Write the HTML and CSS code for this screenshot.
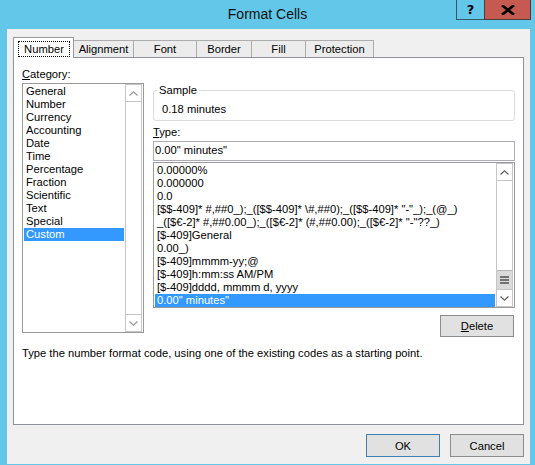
FILE: index.html
```html
<!DOCTYPE html>
<html>
<head>
<meta charset="utf-8">
<title>Format Cells</title>
<link rel="stylesheet" href="styles.css">
</head>
<body>
<div class="window">
  <div class="titlebar">
    <div class="tb-spacer"></div>
    <div class="title">Format Cells</div>
    <div class="caption-btns">
      <div class="cbtn help">?</div>
      <div class="cbtn close">
        <svg width="14" height="10" viewBox="0 0 14 10"><path d="M2 1 L12 9 M12 1 L2 9" stroke="#000" stroke-width="2.6" stroke-linecap="square" fill="none"/></svg>
      </div>
    </div>
  </div>
  <div class="client">
    <div class="tabs">
      <div class="tab sel t-number"><span class="focus">Number</span></div>
      <div class="tab t-align">Alignment</div>
      <div class="tab t-font">Font</div>
      <div class="tab t-border">Border</div>
      <div class="tab t-fill">Fill</div>
      <div class="tab t-prot">Protection</div>
    </div>
    <div class="panel">
      <div class="cols">
        <div class="left">
          <div class="label"><u>C</u>ategory:</div>
          <div class="listbox cat">
            <div class="items">
              <div class="row">General</div>
              <div class="row">Number</div>
              <div class="row">Currency</div>
              <div class="row">Accounting</div>
              <div class="row">Date</div>
              <div class="row">Time</div>
              <div class="row">Percentage</div>
              <div class="row">Fraction</div>
              <div class="row">Scientific</div>
              <div class="row">Text</div>
              <div class="row">Special</div>
              <div class="row sel">Custom</div>
            </div>
            <div class="vscroll">
              <div class="sbtn up"><svg width="9" height="5" viewBox="0 0 9 5"><path d="M0.5 4.5 L4.5 0.8 L8.5 4.5" stroke="#9a9a9a" stroke-width="1.2" fill="none"/></svg></div>
              <div class="track"></div>
              <div class="sbtn down"><svg width="9" height="5" viewBox="0 0 9 5"><path d="M0.5 0.5 L4.5 4.2 L8.5 0.5" stroke="#9a9a9a" stroke-width="1.2" fill="none"/></svg></div>
            </div>
          </div>
        </div>
        <div class="right">
          <fieldset class="sample">
            <legend>Sample</legend>
            <div class="sample-val">0.18 minutes</div>
          </fieldset>
          <div class="label type-label"><u>T</u>ype:</div>
          <div class="input">0.00" minutes"</div>
          <div class="listbox fmt">
            <div class="items">
              <div class="row">0.00000%</div>
              <div class="row">0.000000</div>
              <div class="row">0.0</div>
              <div class="row">[$$-409]* #,##0_);_([$$-409]* \#,##0);_([$$-409]* "-"_);_(@_)</div>
              <div class="row">_([$€-2]* #,##0.00_);_([$€-2]* (#,##0.00);_([$€-2]* "-"??_)</div>
              <div class="row">[$-409]General</div>
              <div class="row">0.00_)</div>
              <div class="row">[$-409]mmmm-yy;@</div>
              <div class="row">[$-409]h:mm:ss AM/PM</div>
              <div class="row">[$-409]dddd, mmmm d, yyyy</div>
              <div class="row sel">0.00" minutes"</div>
            </div>
            <div class="vscroll">
              <div class="sbtn up"><svg width="9" height="5" viewBox="0 0 9 5"><path d="M0.5 4.5 L4.5 0.8 L8.5 4.5" stroke="#606060" stroke-width="1.2" fill="none"/></svg></div>
              <div class="track"></div>
              <div class="thumb"><svg width="9" height="8" viewBox="0 0 9 8"><path d="M0 1 H9 M0 4 H9 M0 7 H9" stroke="#505050" stroke-width="1.3" fill="none"/></svg></div>
              <div class="sbtn down"><svg width="9" height="5" viewBox="0 0 9 5"><path d="M0.5 0.5 L4.5 4.2 L8.5 0.5" stroke="#606060" stroke-width="1.2" fill="none"/></svg></div>
            </div>
          </div>
          <div class="btnrow">
            <div class="btn delete"><u>D</u>elete</div>
          </div>
        </div>
      </div>
      <div class="desc">Type the number format code, using one of the existing codes as a starting point.</div>
    </div>
    <div class="footer">
      <div class="btn default">OK</div>
      <div class="btn">Cancel</div>
    </div>
  </div>
</div>
</body>
</html>
```

FILE: styles.css
```css
* { box-sizing: border-box; }

html, body {
  margin: 0;
  padding: 0;
  background: #63c7e9;
}

body {
  font-family: "Liberation Sans", Arial, sans-serif;
  font-size: 11.2px;
  color: #000;
}

.window {
  width: 535px;
  height: 465px;
  background: #63c7e9;
  padding: 0 5px 1px 7px;
  display: flex;
  flex-direction: column;
}

/* title bar */
.titlebar {
  height: 29px;
  margin: 0 -5px 0 -7px;
  display: grid;
  grid-template-columns: 1fr auto 1fr;
  flex: none;
}

.title {
  font-size: 14px;
  line-height: 29px;
  color: #111;
}

.caption-btns {
  justify-self: end;
  align-self: start;
  display: flex;
  margin-right: 4px;
}

.cbtn {
  height: 20px;
  border: 1px solid #2f5b70;
  border-top: none;
  display: flex;
  align-items: center;
  justify-content: center;
}

.help {
  width: 29px;
  background: #63c7e9;
  font-family: "DejaVu Sans", sans-serif;
  font-weight: bold;
  font-size: 13px;
  line-height: 1;
}

.close {
  width: 47px;
  margin-left: -1px;
  background: #c75a50;
  border-color: #4d3a3a;
}

/* client */
.client {
  flex: 1;
  background: #f0f0f0;
  padding: 8px 6px 0 6px;
}

.tabs {
  height: 20px;
  display: flex;
  align-items: flex-end;
}

.tab {
  height: 17px;
  border: 1px solid #acacac;
  border-bottom: none;
  background: #ececec;
  margin-left: -1px;
  display: flex;
  align-items: center;
  justify-content: center;
  line-height: 13px;
  padding-top: 1px;
}

.tab.sel {
  height: 21px;
  margin-left: 0;
  margin-bottom: -1px;
  background: #fff;
  position: relative;
  z-index: 2;
  border-color: #9a9a9a;
  align-items: flex-start;
  padding-top: 3px;
}

.focus {
  display: block;
  width: 52px;
  height: 16px;
  border: 1px dotted #000;
  text-align: center;
  line-height: 14px;
  margin-left: 1px;
}

.t-number { width: 61px; }
.t-align { width: 61px; }
.t-font { width: 64px; }
.t-border { width: 56px; }
.t-fill { width: 55px; }
.t-prot { width: 69px; }

.panel {
  height: 368px;
  background: #fff;
  border: 1px solid #8f9297;
  padding: 10px 8px 0 8px;
}

.cols {
  display: grid;
  grid-template-columns: 122px 362px;
  column-gap: 9px;
  align-items: start;
}

.label {
  line-height: 13px;
  height: 13px;
}

.left .label {
  margin-bottom: 2px;
}

/* list boxes */
.listbox {
  border: 1px solid #9a9a9a;
  display: flex;
  background: #fff;
}

.listbox.cat { height: 250px; }
.listbox.fmt { height: 146px; margin-top: 1px; }

.items {
  flex: 1;
  padding: 1px;
  overflow: hidden;
}

.row {
  height: 13px;
  line-height: 13px;
  padding-left: 2px;
  white-space: nowrap;
}

.row.sel {
  background: #3399ff;
  color: #fff;
}

.vscroll {
  width: 17px;
  margin-right: 1px;
  border: 1px solid #c6c6c6;
  display: flex;
  flex-direction: column;
}

.sbtn {
  height: 17px;
  flex: none;
  display: flex;
  align-items: center;
  justify-content: center;
}

.sbtn.up { border-bottom: 1px solid #c6c6c6; }
.sbtn.down { border-top: 1px solid #c6c6c6; }

.track { flex: 1; }

.thumb {
  height: 19px;
  flex: none;
  background: #dadada;
  border-top: 1px solid #b5b5b5;
  display: flex;
  align-items: center;
  justify-content: center;
}

/* sample */
.sample {
  margin: 16px 0 0 0;
  padding: 6px 0 4px 8px;
  border: 1px solid #dcdcdc;
  border-radius: 3px;
  min-width: 0;
}

.sample legend {
  padding: 0 2px;
  margin-left: -5px;
  line-height: 13px;
}

.sample-val {
  line-height: 13px;
  height: 13px;
}

.type-label {
  margin-top: 5px;
  margin-bottom: 2px;
}

.input {
  height: 20px;
  border: 1px solid #abadb3;
  padding-left: 1px;
  line-height: 17px;
}

.btnrow {
  display: flex;
  justify-content: flex-end;
  margin-top: 7px;
}

.btn {
  width: 74px;
  height: 22px;
  background: #e1e1e1;
  border: 1px solid #8d8d8d;
  display: flex;
  align-items: center;
  justify-content: center;
}

.delete { margin-right: 1px; }

.desc {
  margin-top: 10px;
  line-height: 13px;
}

.footer {
  display: flex;
  justify-content: flex-end;
  gap: 10px;
  margin-top: 9px;
}

.footer .btn { height: 23px; }

.btn.default { border-color: #3c7fb1; }
```
